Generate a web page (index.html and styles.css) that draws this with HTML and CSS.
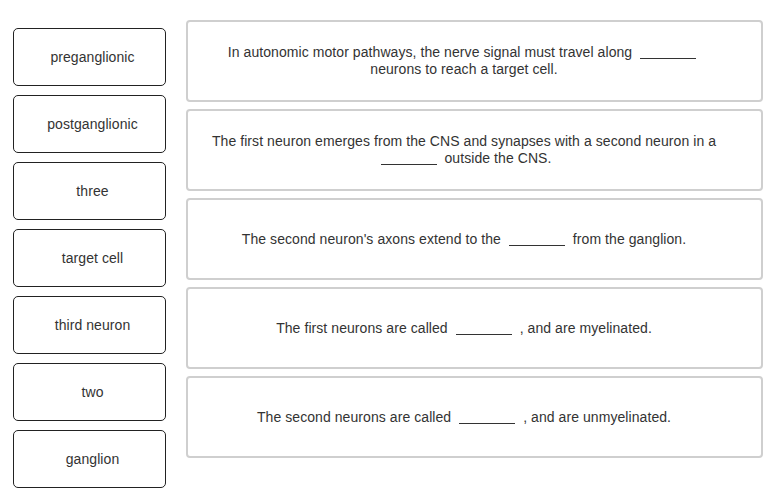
FILE: index.html
```html
<!DOCTYPE html>
<html>
<head>
<meta charset="utf-8">
<link rel="stylesheet" href="styles.css">
</head>
<body>
<div class="page">
  <div class="choices">
    <div class="choice">preganglionic</div>
    <div class="choice">postganglionic</div>
    <div class="choice">three</div>
    <div class="choice">target cell</div>
    <div class="choice">third neuron</div>
    <div class="choice">two</div>
    <div class="choice">ganglion</div>
  </div>
  <div class="statements">
    <div class="statement"><p>In autonomic motor pathways, the nerve signal must travel along <span class="blank"></span> neurons to reach a target cell.</p></div>
    <div class="statement"><p>The first neuron emerges from the CNS and synapses with a second neuron in a <span class="blank"></span> outside the CNS.</p></div>
    <div class="statement"><p>The second neuron's axons extend to the <span class="blank"></span> from the ganglion.</p></div>
    <div class="statement"><p>The first neurons are called <span class="blank"></span> , and are myelinated.</p></div>
    <div class="statement"><p>The second neurons are called <span class="blank"></span> , and are unmyelinated.</p></div>
  </div>
</div>
</body>
</html>
```
FILE: styles.css
```css
html, body {
  margin: 0;
  padding: 0;
  background: #ffffff;
}
body {
  font-family: "Liberation Sans", Arial, sans-serif;
  font-size: 14px;
  letter-spacing: 0.07px;
  color: #333333;
}
.page {
  display: flex;
  align-items: flex-start;
  gap: 20px;
  padding-left: 13px;
}
.choices {
  display: flex;
  flex-direction: column;
  gap: 9px;
  padding-top: 28px;
  width: 153px;
}
.choice {
  box-sizing: border-box;
  height: 58px;
  border: 1px solid #222222;
  border-radius: 5px;
  display: flex;
  align-items: center;
  justify-content: center;
  padding-left: 6px;
}
.statements {
  display: flex;
  flex-direction: column;
  gap: 7px;
  padding-top: 20px;
  width: 577px;
}
.statement {
  box-sizing: border-box;
  height: 82px;
  border: 2px solid #cfcfcf;
  border-radius: 4px;
  display: flex;
  align-items: center;
  justify-content: center;
  padding: 0 40px 0 19px;
}
.statement p {
  margin: 0;
  text-align: center;
  line-height: 17px;
}
.blank {
  display: inline-block;
  width: 56px;
  height: 10px;
  border-bottom: 1px solid #333333;
  margin: 0 4px;
  vertical-align: -2px;
}
```
